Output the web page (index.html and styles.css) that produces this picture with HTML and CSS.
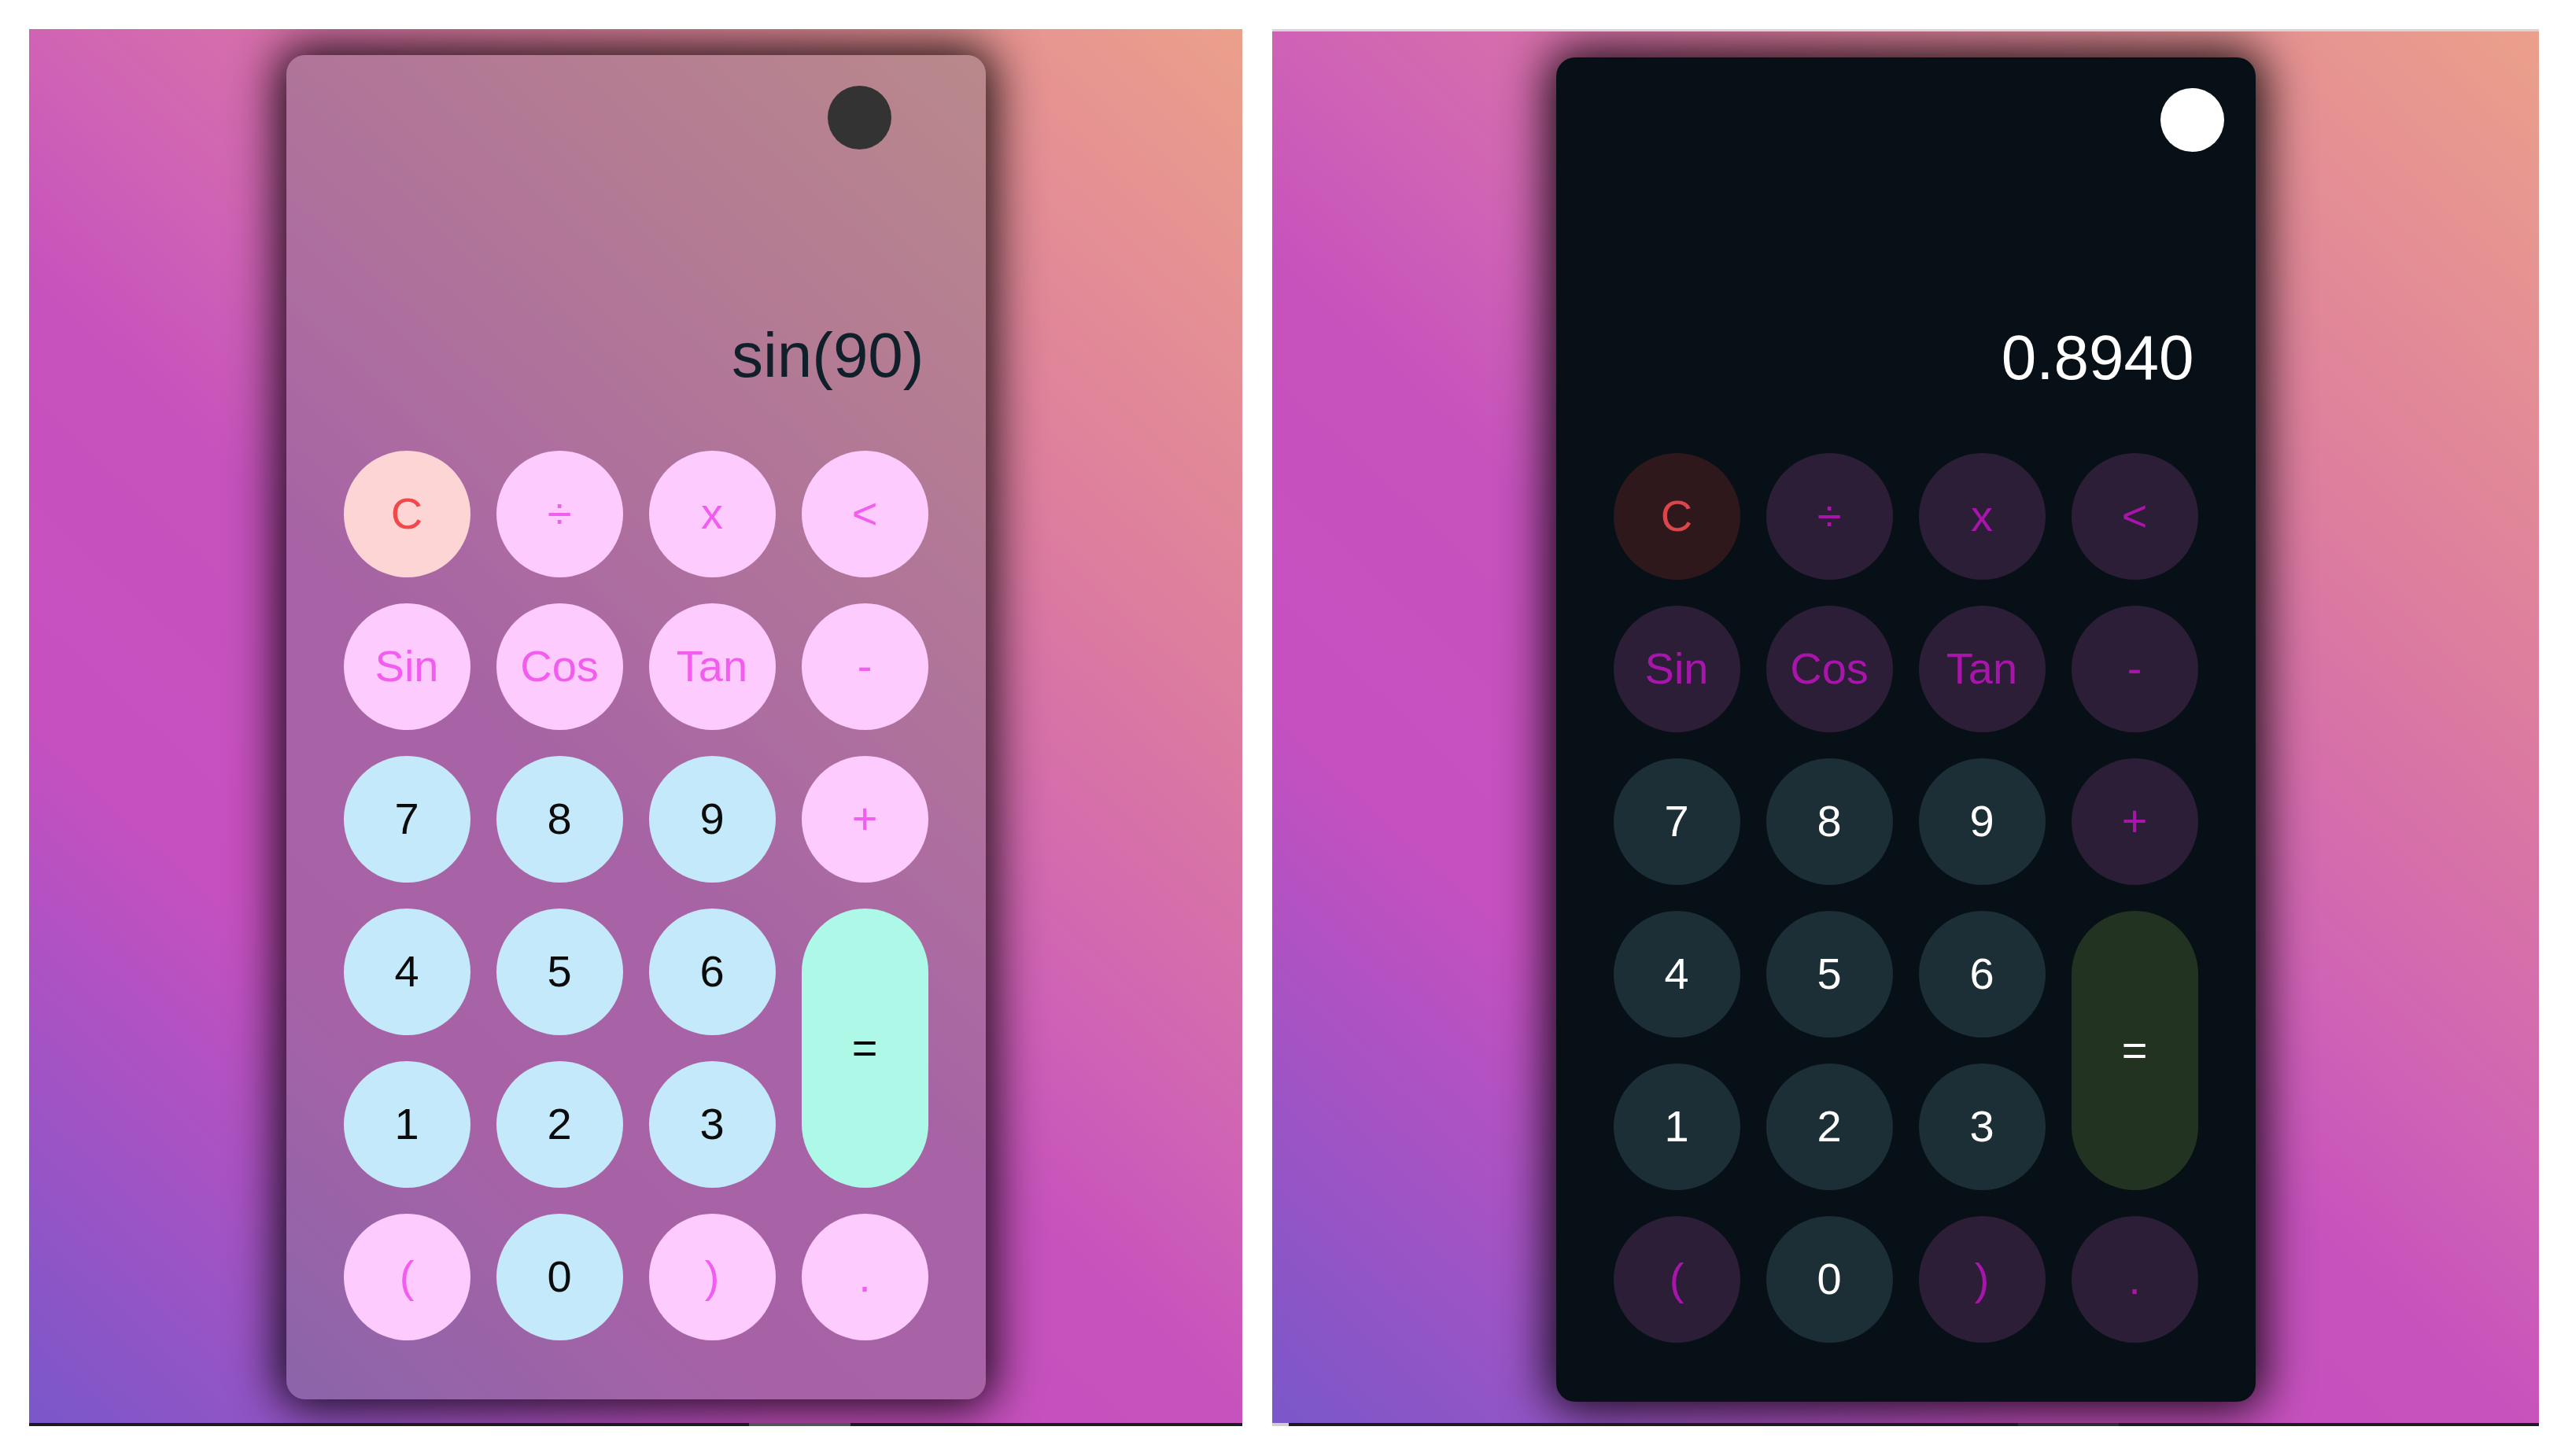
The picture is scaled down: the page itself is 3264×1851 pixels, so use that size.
FILE: index.html
```html
<!DOCTYPE html>
<html lang="en">
<head>
<meta charset="utf-8">
<title>Calculator – light and dark</title>
<link rel="stylesheet" href="styles.css">
</head>
<body>
  <section class="shot shot-left">
    <div class="viewport">
      <div class="calc calc-light">
        <div class="toggle-row"><span class="toggle"></span></div>
        <div class="display">sin(90)</div>
        <div class="keys">
          <button class="key key-clear">C</button>
          <button class="key key-op">÷</button>
          <button class="key key-op">x</button>
          <button class="key key-op">&lt;</button>
          <button class="key key-op">Sin</button>
          <button class="key key-op">Cos</button>
          <button class="key key-op">Tan</button>
          <button class="key key-op">-</button>
          <button class="key key-num">7</button>
          <button class="key key-num">8</button>
          <button class="key key-num">9</button>
          <button class="key key-op">+</button>
          <button class="key key-num">4</button>
          <button class="key key-num">5</button>
          <button class="key key-num">6</button>
          <button class="key key-eq">=</button>
          <button class="key key-num">1</button>
          <button class="key key-num">2</button>
          <button class="key key-num">3</button>
          <button class="key key-op">(</button>
          <button class="key key-num">0</button>
          <button class="key key-op">)</button>
          <button class="key key-op">.</button>
        </div>
      </div>
    </div>
    <div class="hscroll"><span class="thumb"></span></div>
  </section>

  <section class="shot shot-right">
    <div class="viewport">
      <div class="calc calc-dark">
        <div class="toggle-row"><span class="toggle"></span></div>
        <div class="display">0.8940</div>
        <div class="keys">
          <button class="key key-clear">C</button>
          <button class="key key-op">÷</button>
          <button class="key key-op">x</button>
          <button class="key key-op">&lt;</button>
          <button class="key key-op">Sin</button>
          <button class="key key-op">Cos</button>
          <button class="key key-op">Tan</button>
          <button class="key key-op">-</button>
          <button class="key key-num">7</button>
          <button class="key key-num">8</button>
          <button class="key key-num">9</button>
          <button class="key key-op">+</button>
          <button class="key key-num">4</button>
          <button class="key key-num">5</button>
          <button class="key key-num">6</button>
          <button class="key key-eq">=</button>
          <button class="key key-num">1</button>
          <button class="key key-num">2</button>
          <button class="key key-num">3</button>
          <button class="key key-op">(</button>
          <button class="key key-num">0</button>
          <button class="key key-op">)</button>
          <button class="key key-op">.</button>
        </div>
      </div>
    </div>
    <div class="hscroll"><span class="edge"></span><span class="thumb"></span></div>
  </section>
</body>
</html>
```

FILE: styles.css
```css
* { box-sizing: border-box; }

html, body {
  margin: 0;
  background: #ffffff;
}

body {
  display: flex;
  gap: 38px;
  padding: 37px;
  width: 3264px;
  height: 1851px;
  overflow: hidden;
  font-family: "Liberation Sans", Arial, sans-serif;
}

.shot {
  display: flex;
  flex-direction: column;
  height: 1776px;
}

.shot-left { width: 1542px; }
.shot-right { width: 1610px; }

.viewport {
  height: 1772px;
  display: flex;
  justify-content: center;
  padding-top: 33px;
  overflow: hidden;
  background: linear-gradient(43deg,
    #7a57c9 0%,
    #c650c0 28%,
    #c652bd 45%,
    #d063b5 55%,
    #dc7ba0 72%,
    #eba08a 100%);
}

.shot-right .viewport {
  border-top: 3px solid #dcd2dc;
}

.hscroll {
  height: 4px;
  display: flex;
  background: #1c1c1e;
}

.shot-left .thumb {
  margin-left: 915px;
  width: 129px;
  background: #555558;
}

.shot-right .edge {
  width: 21px;
  background: #cfcfd4;
}

.shot-right .thumb {
  margin-left: 927px;
  width: 128px;
  background: #2e2e31;
}

/* calculator card */
.calc {
  width: 889px;
  height: 1709px;
  border-radius: 24px;
  padding: 39px 40px 74px;
  display: flex;
  flex-direction: column;
  box-shadow: 0 0 60px 10px rgba(0, 0, 0, 0.9);
}

.calc-light { background: rgba(124, 124, 130, 0.42); }
.calc-dark { background: #071016; }

.toggle-row {
  height: 81px;
  display: flex;
  justify-content: flex-end;
}

.toggle {
  width: 81px;
  height: 81px;
  border-radius: 50%;
}

.calc-light .toggle { background: #333333; margin-right: 80px; }
.calc-dark .toggle { background: #ffffff; margin-right: 0; }

.display {
  margin: 216px 38px 75px 33px;
  height: 92px;
  font-size: 80px;
  line-height: 92px;
  text-align: right;
  white-space: nowrap;
}

.calc-light .display { color: #10202a; }
.calc-dark .display { color: #ffffff; }

.keys {
  margin: 0 33px;
  display: grid;
  grid-template-columns: repeat(4, 1fr);
  grid-auto-rows: 161px;
  gap: 33px;
}

.key {
  border: none;
  padding: 0 0 3px;
  margin: 0;
  border-radius: 50%;
  font-family: "Liberation Sans", Arial, sans-serif;
  font-size: 56px;
  display: flex;
  align-items: center;
  justify-content: center;
}

.key-eq {
  grid-column: 4;
  grid-row: 4 / span 2;
  border-radius: 81px;
}

/* light palette */
.calc-light .key-clear { background: #fdd5d5; color: #f2484c; }
.calc-light .key-op { background: #fdcbfd; color: #f25cef; }
.calc-light .key-num { background: #c3e9fb; color: #0b0b0b; }
.calc-light .key-eq { background: #adf8e6; color: #0b0b0b; }

/* dark palette */
.calc-dark .key-clear { background: #2f181c; color: #d9474b; }
.calc-dark .key-op { background: #2c1e37; color: #a815ab; }
.calc-dark .key-num { background: #1c2e36; color: #ffffff; }
.calc-dark .key-eq { background: #223322; color: #ffffff; }
```
